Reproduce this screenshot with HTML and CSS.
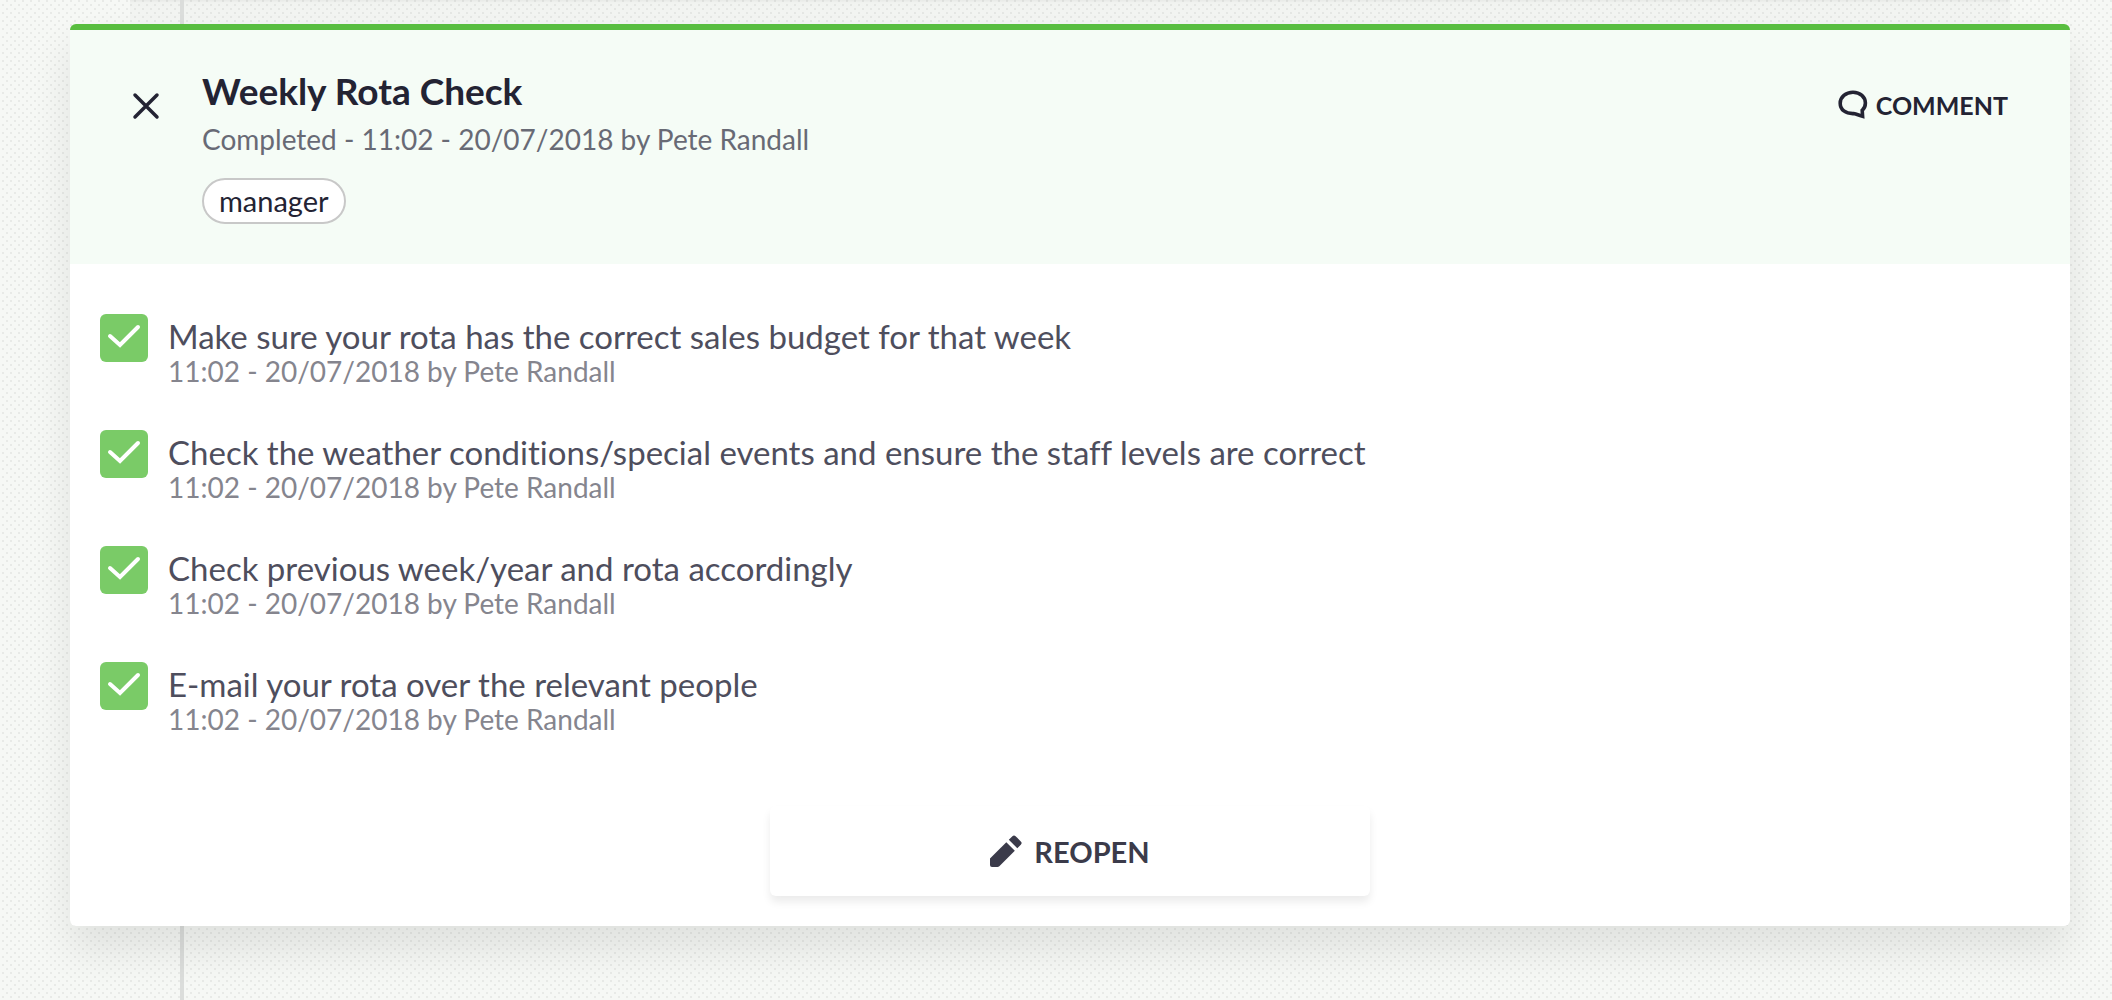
FILE: index.html
```html
<!DOCTYPE html>
<html lang="en">
<head>
    <meta charset="UTF-8">
    <meta name="viewport" content="width=device-width, initial-scale=1.0">
    <title>Weekly Rota Check</title>
    <link rel="stylesheet" href="styles.css">
</head>
<body>
    <main class="timeline">
        <!-- shadow under the previous entry -->
        <div class="previous-entry"></div>

        <article class="card">
            <header class="card-header">
                <button type="button" class="close-btn" aria-label="Close">
                    <svg width="28" height="28" viewBox="0 0 28 28" fill="none" stroke="currentColor" stroke-width="3.5" stroke-linecap="round">
                        <path d="M3 3l22 22M25 3L3 25"/>
                    </svg>
                </button>
                <div class="card-info">
                    <h1>Weekly Rota Check</h1>
                    <p class="status">Completed - 11:02 - 20/07/2018 by Pete Randall</p>
                    <span class="tag">manager</span>
                </div>
                <button type="button" class="comment-btn">
                    <svg width="30" height="30" viewBox="0 0 30 30" fill="none" stroke="currentColor" stroke-width="3.6">
                        <path d="M15 2.2C7.8 2.2 2.2 7 2.2 13.2C2.2 19.8 7.5 23.8 15.5 23.6C18.5 24.2 21 25.3 24.6 26.3L24.2 20.3C26.2 18.6 27.4 16 27.4 13C27.4 7 22.2 2.2 15 2.2Z"/>
                    </svg>
                    COMMENT
                </button>
            </header>

            <ul class="task-list">
                <li>
                    <input type="checkbox" id="task1" checked>
                    <div class="task">
                        <label for="task1">Make sure your rota has the correct sales budget for that week</label>
                        <p>11:02 - 20/07/2018 by Pete Randall</p>
                    </div>
                </li>
                <li>
                    <input type="checkbox" id="task2" checked>
                    <div class="task">
                        <label for="task2">Check the weather conditions/special events and ensure the staff levels are correct</label>
                        <p>11:02 - 20/07/2018 by Pete Randall</p>
                    </div>
                </li>
                <li>
                    <input type="checkbox" id="task3" checked>
                    <div class="task">
                        <label for="task3">Check previous week/year and rota accordingly</label>
                        <p>11:02 - 20/07/2018 by Pete Randall</p>
                    </div>
                </li>
                <li>
                    <input type="checkbox" id="task4" checked>
                    <div class="task">
                        <label for="task4">E-mail your rota over the relevant people</label>
                        <p>11:02 - 20/07/2018 by Pete Randall</p>
                    </div>
                </li>
            </ul>

            <footer class="card-footer">
                <button type="button" class="reopen-btn">
                    <svg width="32" height="32" viewBox="0 0 32 32" fill="currentColor">
                        <path d="M0 23.5L16.3 7.2L24.8 15.7L9.3 31.2Q8.5 32 7.4 32H2Q0 32 0 30Z"/>
                        <path d="M18.8 4.8L22.4 1.2Q24 -.4 25.6 1.2L30.8 6.4Q32.5 8.1 30.8 9.8L27.3 13.3Z"/>
                    </svg>
                    REOPEN
                </button>
            </footer>
        </article>
    </main>
</body>
</html>
```

FILE: styles.css
```css
* {
    box-sizing: border-box;
}
body {
    margin: 0;
    font-family: Lato, "Liberation Sans", sans-serif;
    font-variant-ligatures: none;
    color: #232333;
    background-color: #f6f8f5;
    /* two 2px dots per 8px tile */
    background-image:
        conic-gradient(from 270deg at 2px 2px, #e8eae7 90deg, transparent 0),
        conic-gradient(from 270deg at 2px 2px, #e8eae7 90deg, transparent 0);
    background-size: 8px 8px;
    background-position: 6px 0, 2px 4px;
}
h1, p, ul {
    margin: 0;
    padding: 0;
}
button {
    border: none;
    padding: 0;
    background: none;
    color: inherit;
    font-family: inherit;
    font-weight: bold;
    cursor: pointer;
}
svg {
    display: block;
    flex: none;
}
.timeline {
    display: flex;
    flex-direction: column;
    position: relative;
    min-height: 100vh;
    padding: 0 42px 72px 70px;
}
/* vertical line joining the entries */
.timeline::before {
    content: "";
    position: absolute;
    top: 0;
    bottom: 0;
    left: 180px;
    width: 4px;
    background-color: #dbdddb;
}
.previous-entry {
    height: 24px;
    margin: 0 60px;
    background-image: linear-gradient(rgba(0, 0, 0, 0.06), rgba(0, 0, 0, 0.02) 3px, rgba(0, 0, 0, 0.01));
}
.card {
    position: relative;
    background-color: white;
    border-top: 6px solid #58bd3f;
    border-radius: 6px;
    box-shadow: 0 24px 40px rgba(0, 0, 0, 0.09);
}
.card-header {
    display: flex;
    align-items: flex-start;
    padding: 38px 62px 40px;
    background-color: #f5fcf6;
}
.close-btn {
    margin-top: 24px;
    margin-right: 42px;
}
.card-info {
    flex: 1;
}
.card-info h1 {
    font-size: 37px;
    line-height: 46px;
}
.status {
    margin-bottom: 14px;
    font-size: 28px;
    line-height: 50px;
    color: #686a75;
}
.tag {
    display: block;
    width: fit-content;
    padding: 0 15px;
    border: 2px solid #c8c8c8;
    border-radius: 23px;
    background-color: white;
    font-size: 29px;
    line-height: 42px;
}
.comment-btn {
    display: flex;
    align-items: center;
    gap: 8px;
    margin-top: 22px;
    font-size: 25px;
    line-height: 30px;
}
.task-list {
    list-style: none;
    padding: 50px 30px 72px;
}
.task-list li {
    display: flex;
    gap: 20px;
    margin-bottom: 44px;
}
.task-list li:last-child {
    margin-bottom: 0;
}
.task-list input {
    appearance: none;
    flex: none;
    width: 48px;
    height: 48px;
    margin: 0;
    border-radius: 6px;
    background: #7acb67 url('data:image/svg+xml,<svg xmlns="http://www.w3.org/2000/svg" viewBox="0 0 48 48" fill="none" stroke="white" stroke-width="4" stroke-linecap="round"><path d="M10 22L20 31L38 13"/></svg>');
}
.task label {
    display: block;
    padding-top: 2px;
    font-size: 33px;
    line-height: 40px;
    color: #4e4e5d;
}
.task p {
    font-size: 28px;
    line-height: 30px;
    color: #85858e;
}
.card-footer {
    display: flex;
    justify-content: center;
    padding: 0 30px 30px;
}
.reopen-btn {
    display: flex;
    align-items: center;
    justify-content: center;
    gap: 12px;
    width: 600px;
    max-width: 100%;
    height: 90px;
    border-radius: 6px;
    box-shadow: 0 6px 8px rgba(0, 0, 0, 0.08);
    font-size: 29px;
    color: #3b3b4a;
}
```
